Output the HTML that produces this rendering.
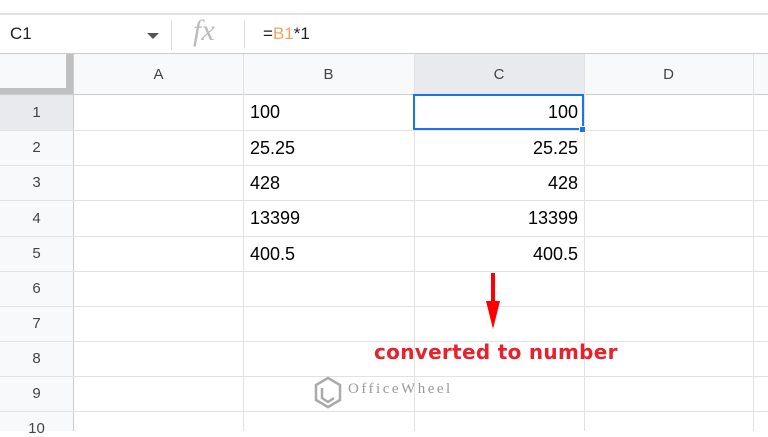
<!DOCTYPE html><html><head><style>
body{margin:0;width:768px;height:431px;overflow:hidden;background:#fff;font-family:"Liberation Sans",Arial,sans-serif;position:relative}
div{position:absolute;box-sizing:border-box}
.h{background:#f8f9fa;color:#444;font-size:15px;text-align:center}
.vl{width:1px;background:#e2e2e2}
.hl{height:1px;background:#e2e2e2;left:0;width:768px}
.t{font-size:18px;color:#000}
</style></head><body>
<div style="left:0;top:13px;width:768px;height:2px;background:#e0e0e0"></div>
<div style="left:10px;top:24px;font-size:17px;color:#222">C1</div>
<div style="left:147px;top:33px;width:0;height:0;border-left:6px solid transparent;border-right:6px solid transparent;border-top:6px solid #555"></div>
<div style="left:171px;top:20px;width:1px;height:30px;background:#ddd"></div>
<div style="left:193px;top:14px;font-family:'Liberation Serif',serif;font-style:italic;font-size:30px;color:#bbb">fx</div>
<div style="left:244px;top:20px;width:1px;height:28px;background:#ddd"></div>
<div style="left:263px;top:24px;font-size:17px;color:#222">=<span style="color:#f4a460">B1</span>*1</div>
<div style="left:0;top:53px;width:768px;height:1px;background:#ccc"></div>
<div class="h" style="left:0;top:54px;width:768px;height:41px"></div>
<div class="h" style="left:0;top:54px;width:73px;height:377px"></div>
<div style="left:0;top:95px;width:73px;height:35px;background:#e8eaed"></div>
<div style="left:414px;top:54px;width:170px;height:41px;background:#e8eaed"></div>
<div style="left:66px;top:54px;width:7px;height:41px;background:#c0c0c0"></div>
<div style="left:0;top:88px;width:73px;height:7px;background:#c0c0c0"></div>
<div class="h" style="left:74px;top:66px;width:169px">A</div>
<div class="h" style="left:243px;top:66px;width:171px;background:none">B</div>
<div class="h" style="left:414px;top:66px;width:170px;background:none">C</div>
<div class="h" style="left:584px;top:66px;width:169px;background:none">D</div>
<div class="hl" style="top:94px;background:#ccc"></div>
<div class="vl" style="left:73px;top:54px;height:377px;background:#ccc"></div>
<div class="vl" style="left:243px;top:54px;height:377px"></div>
<div class="vl" style="left:414px;top:54px;height:377px"></div>
<div class="vl" style="left:584px;top:54px;height:377px"></div>
<div class="vl" style="left:753px;top:54px;height:377px"></div>
<div class="hl" style="top:130px"></div><div class="hl" style="top:165px"></div><div class="hl" style="top:200px"></div><div class="hl" style="top:236px"></div><div class="hl" style="top:271px"></div><div class="hl" style="top:306px"></div><div class="hl" style="top:341px"></div><div class="hl" style="top:376px"></div><div class="hl" style="top:411px"></div>
<div class="h" style="left:0;top:104px;width:73px;background:none">1</div>
<div class="h" style="left:0;top:139px;width:73px;background:none">2</div>
<div class="h" style="left:0;top:174px;width:73px;background:none">3</div>
<div class="h" style="left:0;top:210px;width:73px;background:none">4</div>
<div class="h" style="left:0;top:245px;width:73px;background:none">5</div>
<div class="h" style="left:0;top:280px;width:73px;background:none">6</div>
<div class="h" style="left:0;top:315px;width:73px;background:none">7</div>
<div class="h" style="left:0;top:350px;width:73px;background:none">8</div>
<div class="h" style="left:0;top:385px;width:73px;background:none">9</div>
<div class="h" style="left:0;top:420px;width:73px;background:none">10</div>
<div class="t" style="left:250px;top:102px">100</div>
<div class="t" style="left:250px;top:138px">25.25</div>
<div class="t" style="left:250px;top:173px">428</div>
<div class="t" style="left:250px;top:208px">13399</div>
<div class="t" style="left:250px;top:244px">400.5</div>
<div class="t" style="left:414px;top:102px;width:164px;text-align:right">100</div>
<div class="t" style="left:414px;top:138px;width:164px;text-align:right">25.25</div>
<div class="t" style="left:414px;top:173px;width:164px;text-align:right">428</div>
<div class="t" style="left:414px;top:208px;width:164px;text-align:right">13399</div>
<div class="t" style="left:414px;top:244px;width:164px;text-align:right">400.5</div>
<div style="left:413px;top:94px;width:171px;height:36px;border:2px solid #1a73e8"></div>
<div style="left:579px;top:126px;width:7px;height:7px;background:#1a73e8;border:1px solid #fff"></div>
<svg style="position:absolute;left:484px;top:273px" width="18" height="58" viewBox="0 0 18 58"><rect x="7" y="0" width="4" height="32" fill="#f00"/><path d="M2 28H16L9 56Z" fill="#f00"/></svg>
<div style="left:374px;top:340px;font-size:20px;font-weight:bold;color:#e8222c;font-family:'DejaVu Sans',sans-serif;letter-spacing:0.3px">converted to number</div>
<svg style="position:absolute;left:313px;top:376px" width="30" height="34" viewBox="0 0 30 34"><path d="M15 2L27 9V24L15 31L3 24V9Z M9 12V22L15 26L21 22" fill="none" stroke="#aaa" stroke-width="2.5"/></svg>
<div style="left:348px;top:381px;font-family:'Liberation Serif',serif;font-size:15px;color:#999;letter-spacing:2.5px">OfficeWheel</div>
</body></html>
